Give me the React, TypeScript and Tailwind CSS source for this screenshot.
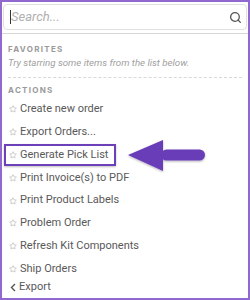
import { Search } from "lucide-react";

const actions = [
  "Create new order",
  "Export Orders...",
  "Generate Pick List",
  "Print Invoice(s) to PDF",
  "Print Product Labels",
  "Problem Order",
  "Refresh Kit Components",
  "Ship Orders",
];

function Star() {
  return (
    <svg width="8" height="8" viewBox="0 0 24 24" fill="none" stroke="#bdbdbd" strokeWidth="2.2" strokeLinejoin="round">
      <polygon points="12 2 15.09 8.26 22 9.27 17 14.14 18.18 21.02 12 17.77 5.82 21.02 7 14.14 2 9.27 8.91 8.26 12 2" />
    </svg>
  );
}

export default function App() {
  return (
    <div className="relative w-[250px] h-[300px] border-2 border-[#9068d0] bg-white overflow-hidden font-['Roboto',sans-serif]">
      <div className="px-px pt-[2px] pb-[3px] border-b border-[#d6d6d6]">
        <div className="flex items-center h-[26px] border border-[#e0e0e0] rounded-sm pl-[6px] pr-[4px]">
          <span className="w-px h-[14px] bg-[#333]" />
          <span className="flex-1 text-[13px] italic text-[#b0b0b0]">Search...</span>
          <Search size={13} strokeWidth={2.4} className="text-[#555]" />
        </div>
      </div>

      <div className="px-[6px] pt-[9px]">
        <div className="h-[12px] leading-[12px] text-[8px] font-bold tracking-[0.16em] text-[#9a9a9a] font-['Inter',sans-serif]">
          FAVORITES
        </div>
        <div className="mt-px h-[14px] leading-[14px] text-[9.7px] italic text-[#a0a0a0]">
          Try starring some items from the list below.
        </div>
        <div className="mt-[7px] border-t border-dashed border-[#d9d9d9]" />
        <div className="mt-[6px] h-[12px] leading-[12px] text-[8px] font-bold tracking-[0.16em] text-[#9a9a9a] font-['Inter',sans-serif]">
          ACTIONS
        </div>
      </div>

      <ul className="mt-[2px]">
        {actions.map((a) => (
          <li key={a} className="h-[22.8px] flex items-center pl-[2px]">
            <div
              className={
                a === "Generate Pick List"
                  ? "flex items-center h-[22px] w-[112px] border-2 border-[#6b40b9] shadow-[0_1px_2px_rgba(0,0,0,0.25)] pl-[3px] whitespace-nowrap"
                  : "flex items-center h-[22px] pl-[5px] whitespace-nowrap"
              }
            >
              <Star />
              <span className="ml-[3px] text-[11px] text-[#595959]">{a}</span>
            </div>
          </li>
        ))}
      </ul>
      <div className="h-[14px] flex items-center pl-[8px] text-[11px] text-[#595959]">
        <svg width="6" height="9" viewBox="0 0 6 9" fill="none" stroke="#555" strokeWidth="1.4">
          <polyline points="5,1 1.5,4.5 5,8" />
        </svg>
        <span className="ml-[3px]">Export</span>
      </div>

      <svg className="absolute left-[123px] top-[135px]" width="84" height="40" viewBox="0 0 84 40">
        <defs>
          <filter id="sh" x="-10%" y="-10%" width="120%" height="130%">
            <feDropShadow dx="0" dy="1" stdDeviation="1" floodColor="#000" floodOpacity="0.3" />
          </filter>
        </defs>
        <g filter="url(#sh)" fill="#6a3db8">
          <polygon points="3,18 38,3 38,34" />
          <rect x="36" y="12.5" width="44" height="11" rx="5.5" />
        </g>
      </svg>
    </div>
  );
}
